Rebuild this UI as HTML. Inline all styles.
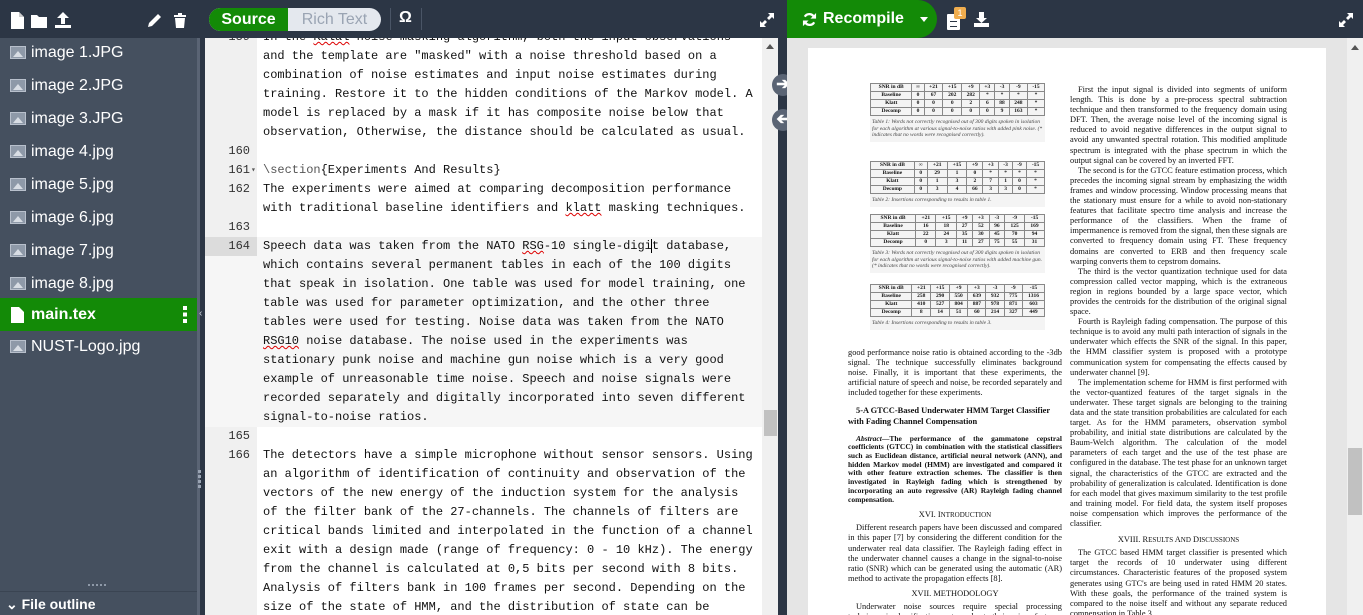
<!DOCTYPE html>
<html><head><meta charset="utf-8"><style>
*{margin:0;padding:0;box-sizing:border-box}
body{width:1363px;height:615px;overflow:hidden;position:relative;background:#2c3645;font-family:"Liberation Sans",sans-serif}
.tb{position:absolute;top:0;left:0;width:1363px;height:38px;background:#2c3645}
.side{position:absolute;top:38px;left:0;width:197px;height:577px;background:#45505f;overflow:hidden}
.item{position:absolute;left:0;width:197px;height:33px;color:#fff;font-size:16px;line-height:33px;padding-left:31px}
.item .ic{position:absolute;left:10px;top:10px;width:16px;height:13px;border:1.5px solid #b8c0cc;background:#8e99a8}
.item .ic:after{content:"";position:absolute;left:2px;bottom:1px;border-left:5px solid transparent;border-right:5px solid transparent;border-bottom:6px solid #d8dde4}
.ed{position:absolute;left:205px;top:38px;width:557px;height:577px;background:#fff;overflow:hidden}
.gut{position:absolute;left:0;top:0;width:52px;height:577px;background:#f0f0f0}
.code{position:absolute;left:0;top:-10px;width:557px;font-family:"Liberation Mono",monospace;font-size:12px;line-height:19px;color:#111}
.r{height:19px;position:relative;white-space:pre}
.r .n{position:absolute;left:0;width:45px;text-align:right;color:#333}
.r .t{position:absolute;left:58px}
.act .n{background:#dcdcdc;width:52px;padding-right:7px;left:0}
.act{background:#f6f6f6}
.sq{text-decoration:underline wavy #d00;text-decoration-thickness:1px}
.pdf{position:absolute;left:787px;top:38px;width:576px;height:577px;background:#e5e5e5;overflow:hidden}
.page{position:absolute;left:21px;top:10px;width:518px;height:567px;background:#fff;font-family:"Liberation Serif",serif;font-size:8.4px;line-height:10.1px;color:#111;overflow:hidden}
.col{position:absolute;text-align:justify}
.tbl{position:absolute;left:62px;width:175px;font-size:5.5px;line-height:7px;background:#f4f4f4;color:#111}
.tbl table{border-collapse:collapse;width:100%}
.tbl td{border:0.5px solid #888;padding:0 2px;text-align:center;font-weight:bold}
.tbl i{display:block;padding:3px 2px;font-size:5.5px;line-height:6.5px;color:#444}
</style></head><body>
<div class="tb">
 <svg style="position:absolute;left:10px;top:11px" width="70" height="18" viewBox="0 0 70 18">
  <path d="M1 1h8l5 5v12H1z" fill="#fff"/><path d="M9 1v5h5" fill="#ccc"/>
  <path d="M21 4h6l2 2h8v11H21z" fill="#fff"/>
  <path d="M53 1l-6 6h4v6h4V7h4z M45 14h16v3H45z" fill="#fff"/>
 </svg>
 <svg style="position:absolute;left:146px;top:11px" width="45" height="18" viewBox="0 0 45 18">
  <path d="M2 16l1-4 9-9 3 3-9 9z" fill="#fff"/>
  <path d="M28 4h12v2H28z M32 2h4v2h-4z M29 7h10l-1 10h-8z" fill="#fff"/>
 </svg>
 <div style="position:absolute;left:209px;top:8px;width:172px;height:23px;border-radius:12px;background:#e4e8ee;overflow:hidden">
  <div style="position:absolute;left:0;top:0;width:79px;height:23px;background:#138a07;color:#fff;font-weight:bold;font-size:16px;line-height:23px;text-align:center">Source</div>
  <div style="position:absolute;left:79px;top:0;width:93px;height:23px;color:#9aa4b3;font-size:16px;line-height:23px;text-align:center">Rich Text</div>
 </div>
 <div style="position:absolute;left:390px;top:8px;width:1px;height:22px;background:#4a5566"></div>
 <div style="position:absolute;left:399px;top:9px;color:#fff;font-weight:bold;font-size:16px">Ω</div>
 <div style="position:absolute;left:421px;top:8px;width:1px;height:22px;background:#4a5566"></div>
 <svg style="position:absolute;left:759px;top:12px" width="16" height="16" viewBox="0 0 16 16"><path d="M9 1h6v6l-2-2-3 3-2-2 3-3z M7 15H1V9l2 2 3-3 2 2-3 3z" fill="#fff"/></svg>
 <div style="position:absolute;left:787px;top:0;width:150px;height:38px;background:#138a07;border-radius:0 19px 19px 0;color:#fff;font-weight:bold;font-size:16px;line-height:38px;padding-left:36px">Recompile</div>
 <svg style="position:absolute;left:802px;top:12px" width="15" height="15" viewBox="0 0 16 16"><path d="M13 6A5.5 5.5 0 0 0 3 5M3 10a5.5 5.5 0 0 0 10 1" stroke="#fff" stroke-width="2.4" fill="none"/><path d="M15 1v6H9z M1 15V9h6z" fill="#fff"/></svg>
 <div style="position:absolute;left:920px;top:17px;border-left:4px solid transparent;border-right:4px solid transparent;border-top:5px solid #fff"></div>
 <div style="position:absolute;left:947px;top:14px;width:13px;height:16px;background:#fff;border-radius:1px"></div>
 <div style="position:absolute;left:950px;top:21px;width:7px;height:6px;border-top:1.5px solid #2c3645;border-bottom:1.5px solid #2c3645"></div>
 <div style="position:absolute;left:954px;top:7px;width:12px;height:12px;background:#f0ad4e;border-radius:2px;color:#fff;font-size:9px;line-height:12px;text-align:center">1</div>
 <svg style="position:absolute;left:973px;top:11px" width="17" height="17" viewBox="0 0 17 17"><path d="M6 1h5v6h3l-5.5 5L3 7h3z M1 12h15v4H1z" fill="#fff"/></svg>
 <svg style="position:absolute;left:1338px;top:12px" width="16" height="16" viewBox="0 0 16 16"><path d="M9 1h6v6l-2-2-3 3-2-2 3-3z M7 15H1V9l2 2 3-3 2 2-3 3z" fill="#fff"/></svg>
</div>

<div class="side">
 <div class="item" style="top:-2px"><span class="ic"></span>image 1.JPG</div>
 <div class="item" style="top:31px"><span class="ic"></span>image 2.JPG</div>
 <div class="item" style="top:64px"><span class="ic"></span>image 3.JPG</div>
 <div class="item" style="top:97px"><span class="ic"></span>image 4.jpg</div>
 <div class="item" style="top:130px"><span class="ic"></span>image 5.jpg</div>
 <div class="item" style="top:163px"><span class="ic"></span>image 6.jpg</div>
 <div class="item" style="top:196px"><span class="ic"></span>image 7.jpg</div>
 <div class="item" style="top:229px"><span class="ic"></span>image 8.jpg</div>
 <div class="item" style="top:260px;background:#138a07;font-weight:bold">
  <svg style="position:absolute;left:11px;top:9px" width="13" height="16" viewBox="0 0 13 16"><path d="M0 0h8l5 5v11H0z" fill="#fff"/></svg>main.tex
  <div style="position:absolute;left:183px;top:8px;width:4px;height:17px;background:repeating-linear-gradient(#fff 0 4px,transparent 4px 6.5px)"></div>
 </div>
 <div class="item" style="top:292px"><span class="ic"></span>NUST-Logo.jpg</div>
 <div style="position:absolute;left:88px;top:546px;width:20px;height:2px;background:repeating-linear-gradient(90deg,#8e99a8 0 2px,transparent 2px 4px)"></div>
 <div style="position:absolute;left:0;top:553px;width:197px;height:1px;background:#3a4452"></div>
 <div style="position:absolute;left:6px;top:558px;color:#fff;font-weight:bold;font-size:14px">⌄ File outline</div>
</div>
<div style="position:absolute;left:197px;top:38px;width:3px;height:577px;background:#5a6474"></div>
<div style="position:absolute;left:199px;top:308px;color:#cfd5dd;font-size:10px">‹</div>
<div style="position:absolute;left:198px;top:470px;width:3px;height:20px;background:repeating-linear-gradient(#9aa4b3 0 3px,transparent 3px 5px)"></div>

<div class="ed">
 <div class="gut"></div>
 <div class="code">
  <div class="r"><span class="n">159</span><span class="t">In the <span class="sq">Kalal</span> noise masking algorithm, both the input observations</span></div>
  <div class="r"><span class="t">and the template are "masked" with a noise threshold based on a</span></div>
  <div class="r"><span class="t">combination of noise estimates and input noise estimates during</span></div>
  <div class="r"><span class="t">training. Restore it to the hidden conditions of the Markov model. A</span></div>
  <div class="r"><span class="t">model is replaced by a mask if it has composite noise below that</span></div>
  <div class="r"><span class="t">observation, Otherwise, the distance should be calculated as usual.</span></div>
  <div class="r"><span class="n">160</span></div>
  <div class="r"><span class="n">161</span><span style="position:absolute;left:46px;font-size:8px;color:#555">▾</span><span class="t"><span style="color:#555">\section</span>{Experiments And Results}</span></div>
  <div class="r"><span class="n">162</span><span class="t">The experiments were aimed at comparing decomposition performance</span></div>
  <div class="r"><span class="t">with traditional baseline identifiers and <span class="sq">klatt</span> masking techniques.</span></div>
  <div class="r"><span class="n">163</span></div>
  <div class="r act"><span class="n">164</span><span class="t">Speech data was taken from the NATO <span class="sq">RSG</span>-10 single-digi<span style="border-left:1.5px solid #000;margin-left:-1px"></span>t database,</span></div>
  <div class="r act"><span class="n"></span><span class="t">which contains several permanent tables in each of the 100 digits</span></div>
  <div class="r act"><span class="n"></span><span class="t">that speak in isolation. One table was used for model training, one</span></div>
  <div class="r act"><span class="n"></span><span class="t">table was used for parameter optimization, and the other three</span></div>
  <div class="r act"><span class="n"></span><span class="t">tables were used for testing. Noise data was taken from the NATO</span></div>
  <div class="r act"><span class="n"></span><span class="t"><span class="sq">RSG10</span> noise database. The noise used in the experiments was</span></div>
  <div class="r act"><span class="n"></span><span class="t">stationary punk noise and machine gun noise which is a very good</span></div>
  <div class="r act"><span class="n"></span><span class="t">example of unreasonable time noise. Speech and noise signals were</span></div>
  <div class="r act"><span class="n"></span><span class="t">recorded separately and digitally incorporated into seven different</span></div>
  <div class="r act"><span class="n"></span><span class="t">signal-to-noise ratios.</span></div>
  <div class="r"><span class="n">165</span></div>
  <div class="r"><span class="n">166</span><span class="t">The detectors have a simple microphone without sensor sensors. Using</span></div>
  <div class="r"><span class="t">an algorithm of identification of continuity and observation of the</span></div>
  <div class="r"><span class="t">vectors of the new energy of the induction system for the analysis</span></div>
  <div class="r"><span class="t">of the filter bank of the 27-channels. The channels of filters are</span></div>
  <div class="r"><span class="t">critical bands limited and interpolated in the function of a channel</span></div>
  <div class="r"><span class="t">exit with a design made (range of frequency: 0 - 10 kHz). The energy</span></div>
  <div class="r"><span class="t">from the channel is calculated at 0,5 bits per second with 8 bits.</span></div>
  <div class="r"><span class="t">Analysis of filters bank in 100 frames per second. Depending on the</span></div>
  <div class="r"><span class="t">size of the state of HMM, and the distribution of state can be</span></div>
 </div>
</div>
<div style="position:absolute;left:762px;top:38px;width:16px;height:577px;background:#f0f0f0"></div>
<div style="position:absolute;left:766px;top:44px;border-left:4px solid transparent;border-right:4px solid transparent;border-bottom:5px solid #555"></div>
<div style="position:absolute;left:764px;top:410px;width:13px;height:26px;background:#c1c1c1"></div>
<div style="position:absolute;left:778px;top:38px;width:9px;height:577px;background:#2c3645"></div>
<div style="position:absolute;left:772px;top:74px;width:22px;height:22px;border-radius:50%;background:#5a6474;color:#fff;font-size:16px;font-weight:bold;line-height:22px;text-align:center">➔</div>
<div style="position:absolute;left:772px;top:109px;width:22px;height:22px;border-radius:50%;background:#5a6474;color:#fff;font-size:16px;font-weight:bold;line-height:22px;text-align:center;transform:scaleX(-1)">➔</div>

<div class="pdf">
 <div class="page">
  <div class="tbl" style="top:35px"><table><tr><td>SNR in dB</td><td>∞</td><td>+21</td><td>+15</td><td>+9</td><td>+3</td><td>-3</td><td>-9</td><td>-15</td></tr><tr><td>Baseline</td><td>0</td><td>67</td><td>202</td><td>282</td><td>*</td><td>*</td><td>*</td><td>*</td></tr><tr><td>Klatt</td><td>0</td><td>0</td><td>0</td><td>2</td><td>6</td><td>88</td><td>248</td><td>*</td></tr><tr><td>Decomp</td><td>0</td><td>0</td><td>0</td><td>0</td><td>0</td><td>9</td><td>163</td><td>*</td></tr></table><i>Table 1: Words not correctly recognised out of 300 digits spoken in isolation for each algorithm at various signal-to-noise ratios with added pink noise. (* indicates that no words were recognised correctly).</i></div>
  <div class="tbl" style="top:113px"><table><tr><td>SNR in dB</td><td>∞</td><td>+21</td><td>+15</td><td>+9</td><td>+3</td><td>-3</td><td>-9</td><td>-15</td></tr><tr><td>Baseline</td><td>0</td><td>29</td><td>1</td><td>0</td><td>*</td><td>*</td><td>*</td><td>*</td></tr><tr><td>Klatt</td><td>0</td><td>1</td><td>3</td><td>2</td><td>7</td><td>1</td><td>0</td><td>*</td></tr><tr><td>Decomp</td><td>0</td><td>3</td><td>4</td><td>66</td><td>3</td><td>3</td><td>0</td><td>*</td></tr></table><i>Table 2: Insertions corresponding to results in table 1.</i></div>
  <div class="tbl" style="top:166px"><table><tr><td>SNR in dB</td><td>+21</td><td>+15</td><td>+9</td><td>+3</td><td>-3</td><td>-9</td><td>-15</td></tr><tr><td>Baseline</td><td>16</td><td>18</td><td>27</td><td>52</td><td>96</td><td>125</td><td>169</td></tr><tr><td>Klatt</td><td>22</td><td>24</td><td>35</td><td>30</td><td>45</td><td>70</td><td>94</td></tr><tr><td>Decomp</td><td>0</td><td>3</td><td>11</td><td>27</td><td>75</td><td>55</td><td>31</td></tr></table><i>Table 3: Words not correctly recognised out of 300 digits spoken in isolation for each algorithm at various signal-to-noise ratios with added machine gun. (* indicates that no words were recognised correctly).</i></div>
  <div class="tbl" style="top:236px"><table><tr><td>SNR in dB</td><td>+21</td><td>+15</td><td>+9</td><td>+3</td><td>-3</td><td>-9</td><td>-15</td></tr><tr><td>Baseline</td><td>258</td><td>290</td><td>550</td><td>639</td><td>932</td><td>775</td><td>1316</td></tr><tr><td>Klatt</td><td>410</td><td>527</td><td>804</td><td>887</td><td>978</td><td>871</td><td>603</td></tr><tr><td>Decomp</td><td>8</td><td>14</td><td>51</td><td>60</td><td>214</td><td>327</td><td>449</td></tr></table><i>Table 4: Insertions corresponding to results in table 3.</i></div>

  <div class="col" style="left:40px;top:300px;width:214px">good performance noise ratio is obtained according to the -3db signal. The technique successfully eliminates background noise. Finally, it is important that these experiments, the artificial nature of speech and noise, be recorded separately and included together for these experiments.
  <div style="font-weight:bold;margin-top:8px;text-indent:8px;text-align:left">5-A GTCC-Based Underwater HMM Target Classifier with Fading Channel Compensation</div>
  <div style="font-weight:bold;font-size:7.5px;line-height:8.7px;margin-top:8px;text-indent:8px"><i>Abstract</i>—The performance of the gammatone cepstral coefficients (GTCC) in combination with the statistical classifiers such as Euclidean distance, artificial neural network (ANN), and hidden Markov model (HMM) are investigated and compared it with other feature extraction schemes. The classifier is then investigated in Rayleigh fading which is strengthened by incorporating an auto regressive (AR) Rayleigh fading channel compensation.</div>
  <div style="text-align:center;margin:6px 0 3px">XVI. I<span style="font-size:7px">NTRODUCTION</span></div>
  <div style="text-indent:8px">Different research papers have been discussed and compared in this paper [7] by considering the different condition for the underwater real data classifier. The Rayleigh fading effect in the underwater channel causes a change in the signal-to-noise ratio (SNR) which can be generated using the automatic (AR) method to activate the propagation effects [8].</div>
  <div style="text-align:center;margin:5px 0 3px">XVII. METHODOLOGY</div>
  <div style="text-indent:8px">Underwater noise sources require special processing techniques in classification systems due to their unique features</div>
  </div>

  <div class="col" style="left:262px;top:37px;width:217px"><div style="text-indent:8px">First the input signal is divided into segments of uniform length. This is done by a pre-process spectral subtraction technique and then transformed to the frequency domain using DFT. Then, the average noise level of the incoming signal is reduced to avoid negative differences in the output signal to avoid any unwanted spectral rotation. This modified amplitude spectrum is integrated with the phase spectrum in which the output signal can be covered by an inverted FFT.</div>
  <div style="text-indent:8px">The second is for the GTCC feature estimation process, which precedes the incoming signal stream by emphasizing the width frames and window processing. Window processing means that the stationary must ensure for a while to avoid non-stationary features that facilitate spectro time analysis and increase the performance of the classifiers. When the frame of impermanence is removed from the signal, then these signals are converted to frequency domain using FT. These frequency domains are converted to ERB and then frequency scale warping converts them to cepstrom domains.</div>
  <div style="text-indent:8px">The third is the vector quantization technique used for data compression called vector mapping, which is the extraneous region in regions bounded by a large space vector, which provides the centroids for the distribution of the original signal space.</div>
  <div style="text-indent:8px">Fourth is Rayleigh fading compensation. The purpose of this technique is to avoid any multi path interaction of signals in the underwater which effects the SNR of the signal. In this paper, the HMM classifier system is proposed with a prototype communication system for compensating the effects caused by underwater channel [9].</div>
  <div style="text-indent:8px">The implementation scheme for HMM is first performed with the vector-quantized features of the target signals in the underwater. These target signals are belonging to the training data and the state transition probabilities are calculated for each target. As for the HMM parameters, observation symbol probability, and initial state distributions are calculated by the Baum-Welch algorithm. The calculation of the model parameters of each target and the use of the test phase are configured in the database. The test phase for an unknown target signal, the characteristics of the GTCC are extracted and the probability of generalization is calculated. Identification is done for each model that gives maximum similarity to the test profile and training model. For field data, the system itself proposes noise compensation which improves the performance of the classifier.</div>
  <div style="text-align:center;margin:6px 0 3px">XVIII. R<span style="font-size:7px">ESULTS</span> A<span style="font-size:7px">ND</span> D<span style="font-size:7px">ISCUSSIONS</span></div>
  <div style="text-indent:8px">The GTCC based HMM target classifier is presented which target the records of 10 underwater using different circumstances. Characteristic features of the proposed system generates using GTC's are being used in rated HMM 20 states. With these goals, the performance of the trained system is compared to the noise itself and without any separate reduced compensation in Table 3.</div>
  </div>
 </div>
 <div style="position:absolute;left:560px;top:0;width:16px;height:577px;background:#f0f0f0"></div>
 <div style="position:absolute;left:564px;top:7px;border-left:4px solid transparent;border-right:4px solid transparent;border-bottom:5px solid #555"></div>
 <div style="position:absolute;left:561px;top:410px;width:14px;height:67px;background:#c1c1c1"></div>
</div>
</body></html>
